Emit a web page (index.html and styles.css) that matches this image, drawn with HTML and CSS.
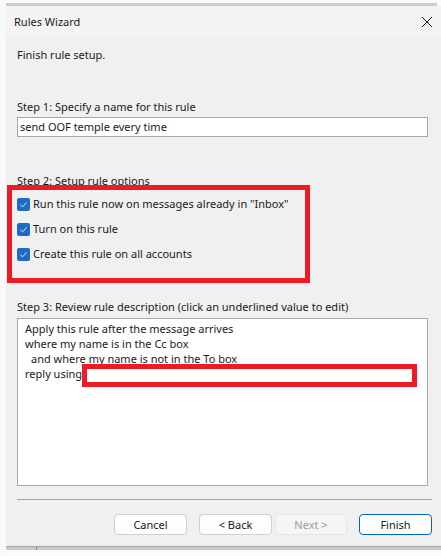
FILE: index.html
```html
<!DOCTYPE html>
<html lang="en">
<head>
<meta charset="utf-8">
<title>Rules Wizard</title>
<link rel="stylesheet" href="styles.css">
</head>
<body>
<div class="screen">
  <div class="strip"></div>
  <div class="win">
    <div class="topline"></div>
    <div class="dialog">
      <div class="titlebar">
        <span class="title">Rules Wizard</span>
        <svg class="close" width="12" height="12" viewBox="0 0 12 12" aria-hidden="true">
          <path d="M1 1 L11 11 M11 1 L1 11" stroke="#1a1a1a" stroke-width="1" fill="none"/>
        </svg>
      </div>
      <div class="content">
        <p class="finish">Finish rule setup.</p>
        <p class="label step1">Step 1: Specify a name for this rule</p>
        <div class="textbox">send OOF temple every time</div>
        <p class="label step2">Step 2: Setup rule options</p>
        <ul class="options">
          <li class="option"><span class="check"><svg width="13" height="13" viewBox="0 0 13 13"><path d="M3.5 6.8 L5.6 8.8 L9.6 4.4" stroke="#e3eefa" stroke-width="1" fill="none"/></svg></span>Run this rule now on messages already in "Inbox"</li>
          <li class="option"><span class="check"><svg width="13" height="13" viewBox="0 0 13 13"><path d="M3.5 6.8 L5.6 8.8 L9.6 4.4" stroke="#e3eefa" stroke-width="1" fill="none"/></svg></span>Turn on this rule</li>
          <li class="option"><span class="check"><svg width="13" height="13" viewBox="0 0 13 13"><path d="M3.5 6.8 L5.6 8.8 L9.6 4.4" stroke="#e3eefa" stroke-width="1" fill="none"/></svg></span>Create this rule on all accounts</li>
        </ul>
        <p class="label step3">Step 3: Review rule description (click an underlined value to edit)</p>
        <div class="desc">
          <div class="line">Apply this rule after the message arrives</div>
          <div class="line">where my name is in the Cc box</div>
          <div class="line indent">and where my name is not in the To box</div>
          <div class="line">reply using</div>
        </div>
        <div class="sep"></div>
        <div class="buttons">
          <button class="btn">Cancel</button>
          <button class="btn back">&lt; Back</button>
          <button class="btn next" disabled>Next &gt;</button>
          <button class="btn finish-btn">Finish</button>
        </div>
      </div>
    </div>
    <div class="bottombar"><div class="tick"></div></div>
  </div>
  <div class="redbox box1"></div>
  <div class="redbox box2"></div>
</div>
</body>
</html>
```
FILE: styles.css
```css
html, body {
  margin: 0;
  padding: 0;
  background: #fbfbfb;
}
body {
  font-family: "Noto Sans", "Open Sans", sans-serif;
  font-size: 11px;
  color: #1a1a1a;
}
.screen {
  position: relative;
  display: flex;
  width: 441px;
  height: 556px;
  overflow: hidden;
}
.strip {
  width: 6px;
  background: #f9f9f9;
  flex: none;
}
.win {
  flex: 1;
  display: flex;
  flex-direction: column;
  padding-top: 3px;
}
.topline {
  height: 3px;
  background: #cdcdcd;
  margin-right: 4px;
}
.dialog {
  background: #f0f0f0;
  display: flex;
  flex-direction: column;
}
.titlebar {
  height: 30px;
  background: #f3f3f3;
  display: flex;
  align-items: center;
  justify-content: space-between;
  padding: 1px 8px 0 8px;
  box-sizing: border-box;
}
.title {
  line-height: 16px;
}
.close {
  display: block;
}
.content {
  padding: 0 13px 11px 11px;
  display: flex;
  flex-direction: column;
}
p {
  margin: 0;
  line-height: 16px;
}
.finish {
  margin-top: 11px;
}
.step1 {
  margin-top: 36px;
}
.textbox {
  margin-top: 2px;
  height: 18px;
  line-height: 18px;
  background: #ffffff;
  border: 1px solid #a8a8a8;
  padding-left: 2px;
}
.step2 {
  margin-top: 36px;
}
.options {
  list-style: none;
  margin: 7px 0 0 0;
  padding: 0;
  display: flex;
  flex-direction: column;
  gap: 9px;
}
.option {
  display: flex;
  align-items: center;
  height: 16px;
  line-height: 16px;
}
.check {
  width: 13px;
  height: 13px;
  border-radius: 2px;
  background: #1f6bc4;
  margin-right: 3px;
  display: block;
  flex: none;
}
.check svg {
  display: block;
}
.step3 {
  margin-top: 37px;
}
.desc {
  margin-top: 3px;
  height: 162px;
  background: #ffffff;
  border: 1px solid #a8a8a8;
  padding: 2px 0 2px 7px;
}
.line {
  line-height: 15px;
  white-space: nowrap;
}
.indent {
  padding-left: 6px;
}
.sep {
  margin-top: 13px;
  height: 1px;
  background: #a3a3a3;
  margin-right: -4px;
}
.buttons {
  margin-top: 14px;
  margin-right: -4px;
  display: flex;
  justify-content: flex-end;
}
.btn {
  width: 73px;
  height: 21px;
  font-family: inherit;
  font-size: 11px;
  color: #1a1a1a;
  background: #fdfdfd;
  border: 1px solid #d0d0d0;
  border-radius: 4px;
  padding: 0;
  line-height: 19px;
  margin-left: 12px;
}
.back {
  margin-left: 12px;
}
.next {
  width: 72px;
  margin-left: 3px;
  background: #f5f5f5;
  border-color: #e6e6e6;
  color: #9d9d9d;
}
.finish-btn {
  border: 1px solid #0067c0;
}
.bottombar {
  height: 3px;
  border-top: 1px solid #a6a6a6;
  background: #c9c9c9;
  position: relative;
}
.tick {
  width: 1px;
  height: 3px;
  margin-left: 30px;
  background: #8f8f8f;
}
.redbox {
  position: absolute;
  border: 5px solid #ed1c24;
  box-sizing: border-box;
}
.box1 {
  left: 7px;
  top: 185px;
  width: 303px;
  height: 98px;
}
.box2 {
  left: 82px;
  top: 364px;
  width: 335px;
  height: 23px;
  background: #ffffff;
}
```
